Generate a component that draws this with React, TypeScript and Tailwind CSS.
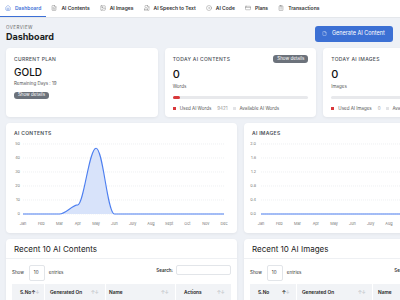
import React from 'react';
import { Home, FileText, Image, FileAudio, CircleDot, CreditCard, ClipboardList, File } from 'lucide-react';

const months = ['Jan', 'Feb', 'Mar', 'Apr', 'May', 'Jun', 'July', 'Aug', 'Sept', 'Oct', 'Nov', 'Dec'];

const navItems = [
  { label: 'Dashboard', Icon: Home, active: true },
  { label: 'AI Contents', Icon: FileText },
  { label: 'AI Images', Icon: Image },
  { label: 'AI Speech to Text', Icon: FileAudio },
  { label: 'AI Code', Icon: CircleDot },
  { label: 'Plans', Icon: CreditCard },
  { label: 'Transactions', Icon: ClipboardList },
];

function Chart({ yLabels, labelEnd, curve, area }: { yLabels: string[]; labelEnd: number; curve: string; area?: string }) {
  const x0 = 17;
  const step = 201 / 11;
  const top = 6;
  const bottom = 76;
  const rows = yLabels.length - 1;
  return (
    <svg width="231" height="91" viewBox="0 0 231 91" className="block">
      {yLabels.map((l, i) => {
        const y = bottom - ((bottom - top) / rows) * i;
        return (
          <g key={l}>
            <line x1={x0} x2={218} y1={y} y2={y} stroke="#e3e6ea" strokeWidth="0.6" strokeDasharray="1 1" />
            <text x={labelEnd} y={y + 1.4} textAnchor="end" fontSize="3.8" fill="#777" fontFamily="Inter, sans-serif">
              {l}
            </text>
          </g>
        );
      })}
      {months.map((m, i) => (
        <text key={m} x={x0 + step * i} y={87} textAnchor="middle" fontSize="3.8" fill="#777" fontFamily="Inter, sans-serif">
          {m}
        </text>
      ))}
      {area && <path d={area} fill="#d8e3fa" />}
      <path d={curve} fill="none" stroke="#4d7ff0" strokeWidth="1.1" />
    </svg>
  );
}

function SortArrows({ upDark }: { upDark?: boolean }) {
  return (
    <span className="flex items-center text-[5px] leading-none">
      <span className={upDark ? 'text-[#222]' : 'text-[#c4c7cc]'}>↑</span>
      <span className="text-[#c4c7cc] -ml-[0.5px]">↓</span>
    </span>
  );
}

function TodayCard({ title, unit, used, usedVal, avail, red }: { title: string; unit: string; used: string; usedVal: string; avail: string; red: number }) {
  return (
    <div className="rounded-[4px] bg-white shadow-[0_1px_3px_rgba(0,0,0,0.06)] px-[8px] pt-[7px] h-[69px]">
      <div className="flex h-[8px] items-center justify-between">
        <span className="text-[5px] leading-[6px] tracking-[0.06em] text-[#4b4f56] font-medium">{title}</span>
        <span className="flex h-[8px] w-[35px] items-center justify-center rounded-[3px] bg-[#6c727b] text-[4.5px] text-white">Show details</span>
      </div>
      <div className="mt-[6px] text-[11px] leading-[10px] font-medium text-[#111]">0</div>
      <div className="mt-[5px] text-[4.5px] leading-[5px] text-[#555]">{unit}</div>
      <div className="mt-[7px] h-[3px] w-full rounded-full bg-[#e8e9ec]">
        <div className="h-[3px] rounded-full bg-[#d9383b]" style={{ width: `${red}px` }} />
      </div>
      <div className="mt-[6.5px] flex items-center text-[4.5px] leading-[5px] text-[#555]">
        <span className="h-[3px] w-[3px] bg-[#d9383b]" />
        <span className="ml-[4px]">{used}</span>
        <span className="ml-[6px] text-[#999]">{usedVal}</span>
        <span className="ml-[5px] h-[3px] w-[3px] bg-[#e2e3e6]" />
        <span className="ml-[4px]">{avail}</span>
      </div>
    </div>
  );
}

function TableCard({ title, cols }: { title: string; cols: { label: string; w: number; pl: number; up?: boolean }[] }) {
  return (
    <div className="rounded-[4px] bg-white shadow-[0_1px_3px_rgba(0,0,0,0.06)] h-[80px]">
      <div className="px-[8px] pt-[5px] pb-[4px] border-b border-[#eef0f3] text-[8px] leading-[10px] text-[#222]">{title}</div>
      <div className="px-[6px] pt-[6px]">
        <div className="flex justify-between">
          <div className="flex items-center text-[4.5px] text-[#333]">
            <span>Show</span>
            <span className="ml-[5px] flex h-[16px] w-[16px] items-center pl-[4px] rounded-[2px] border border-[#e2e5e9]">10</span>
            <span className="ml-[4px]">entries</span>
          </div>
          <div className="flex items-start text-[4.5px] font-semibold text-[#333]">
            <span className="mt-[3px]">Search:</span>
            <span className="ml-[3px] h-[10px] w-[55px] rounded-[2px] border border-[#e2e5e9]" />
          </div>
        </div>
        <div className="mt-[3px] flex h-[17px] bg-[#f1f3f6] text-[4.8px] font-semibold text-[#222]">
          {cols.map((c, i) => (
            <div
              key={c.label}
              className={`flex items-center justify-between pr-[6px] ${i > 0 ? 'border-l border-white' : ''}`}
              style={{ width: c.w, paddingLeft: c.pl }}
            >
              <span>{c.label}</span>
              <SortArrows upDark={c.up} />
            </div>
          ))}
        </div>
      </div>
    </div>
  );
}

export default function App() {
  const step = 201 / 11;
  const xs = months.map((_, i) => 17 + step * i);
  const yOf = (v: number) => 76 - 1.4 * v;
  const curve = `M${xs[0]},76 L${xs[2]},76 C${xs[2] + 6},76 ${xs[3] - 6},${yOf(6.2)} ${xs[3]},${yOf(6.5)} C${xs[3] + 6},${yOf(7)} ${xs[4] - 7},${yOf(47)} ${xs[4]},${yOf(47)} C${xs[4] + 7},${yOf(47)} ${xs[5] - 7},76 ${xs[5]},76 L${xs[11]},76`;
  const area = `${curve} Z`;
  const flat = `M17,76 L218,76`;

  return (
    <div className="relative h-[300px] w-[400px] overflow-hidden bg-[#eef1f6]" style={{ fontFamily: 'Inter, "Liberation Sans", sans-serif' }}>
      <nav className="flex h-[17px] w-[400px] bg-white shadow-[0_1px_0_#e4e7eb]">
        {navItems.map(({ label, Icon, active }) => (
          <div
            key={label}
            className={`flex h-[17px] items-center gap-[4px] px-[5px] border-b-[1.5px] ${active ? 'border-[#3c6fd6] text-[#3c6fd6]' : 'border-transparent text-[#333]'}`}
          >
            <Icon size={6} strokeWidth={1.6} className={active ? 'text-[#3c6fd6]' : 'text-[#777]'} />
            <span className="text-[5px] font-semibold leading-none whitespace-nowrap">{label}</span>
          </div>
        ))}
      </nav>

      <div className="flex w-[400px] items-center justify-between pl-[6px] pr-[7px] pt-[8px]">
        <div>
          <div className="text-[4.5px] leading-[5px] tracking-[0.1em] text-[#666]">OVERVIEW</div>
          <div className="mt-[2px] text-[9px] leading-[10px] font-bold text-[#1a1d21]">Dashboard</div>
        </div>
        <button className="flex h-[16px] w-[78px] items-center gap-[5px] rounded-[3px] bg-[#3c70d4] pl-[7px] text-[5.5px] text-white">
          <File size={5} strokeWidth={1.6} />
          <span className="whitespace-nowrap">Generate AI Content</span>
        </button>
      </div>

      <div className="mt-[6px] ml-[6px] flex w-[469px] flex-col gap-[6px]">
        <div className="grid grid-cols-3 gap-[7px]">
          <div className="rounded-[4px] bg-white shadow-[0_1px_3px_rgba(0,0,0,0.06)] px-[8px] pt-[8px] h-[69px]">
            <div className="text-[5px] leading-[6px] tracking-[0.06em] text-[#4b4f56] font-medium">CURRENT PLAN</div>
            <div className="mt-[5px] text-[10px] leading-[10px] font-medium text-[#111]">GOLD</div>
            <div className="mt-[4px] text-[4.5px] leading-[5px] text-[#555]">Remaining Days : 19</div>
            <div className="mt-[6px] flex h-[7px] w-[35px] items-center justify-center rounded-[3px] bg-[#6c727b] text-[4.5px] text-white">Show details</div>
          </div>
          <TodayCard title="TODAY AI CONTENTS" unit="Words" used="Used AI Words" usedVal="9421" avail="Available AI Words" red={7} />
          <TodayCard title="TODAY AI IMAGES" unit="Images" used="Used AI Images" usedVal="0" avail="Available AI Images" red={0} />
        </div>

        <div className="grid grid-cols-2 gap-[7px]">
          <div className="rounded-[4px] bg-white shadow-[0_1px_3px_rgba(0,0,0,0.06)] pt-[7px] h-[110px]">
            <div className="px-[8px] text-[5px] leading-[6px] tracking-[0.06em] font-semibold text-[#4b4f56]">AI CONTENTS</div>
            <div className="mt-[2px]">
              <Chart yLabels={['0', '10', '20', '30', '40', '50']} labelEnd={14} curve={curve} area={area} />
            </div>
          </div>
          <div className="rounded-[4px] bg-white shadow-[0_1px_3px_rgba(0,0,0,0.06)] pt-[7px] h-[110px]">
            <div className="px-[8px] text-[5px] leading-[6px] tracking-[0.06em] font-semibold text-[#4b4f56]">AI IMAGES</div>
            <div className="mt-[2px]">
              <Chart yLabels={['0.0', '0.4', '0.8', '1.2', '1.6', '2.0']} labelEnd={12} curve={flat} />
            </div>
          </div>
        </div>

        <div className="grid grid-cols-2 gap-[7px]">
          <TableCard
            title="Recent 10 AI Contents"
            cols={[
              { label: 'S.No', w: 32, pl: 8, up: true },
              { label: 'Generated On', w: 61, pl: 5 },
              { label: 'Name', w: 70, pl: 3 },
              { label: 'Actions', w: 56, pl: 8 },
            ]}
          />
          <TableCard
            title="Recent 10 AI Images"
            cols={[
              { label: 'S.No', w: 46, pl: 8, up: true },
              { label: 'Generated On', w: 76, pl: 5 },
              { label: 'Name', w: 50, pl: 5 },
              { label: 'Actions', w: 47, pl: 8 },
            ]}
          />
        </div>
      </div>
    </div>
  );
}
